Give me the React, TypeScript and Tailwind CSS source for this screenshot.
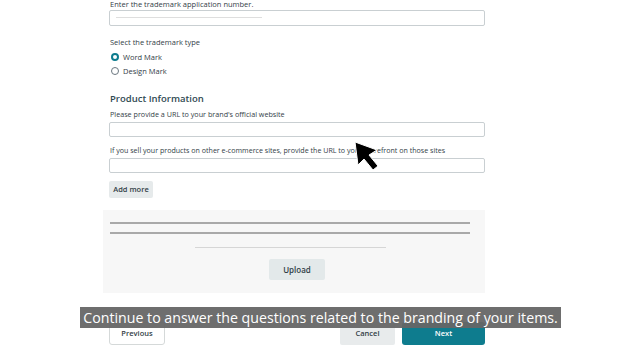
import React from "react";

function Radio({ checked, label }: { checked?: boolean; label: string }) {
  return (
    <div className="flex h-[10px] items-center gap-[4px]">
      {checked ? (
        <span className="box-border h-[8px] w-[8px] rounded-full border-[2.5px] border-[#0e7c8e] bg-white" />
      ) : (
        <span className="box-border h-[8px] w-[8px] rounded-full border border-[#6b7780] bg-white" />
      )}
      <span className="text-[7.5px] leading-[10px] text-[#333e47]">{label}</span>
    </div>
  );
}

function Field({ children }: { children?: React.ReactNode }) {
  return (
    <div className="mt-[3px] h-[15px] rounded-[2px] border border-[#c9cfd2] bg-white">{children}</div>
  );
}

export default function App() {
  return (
    <div className="relative h-[360px] w-[640px] overflow-hidden bg-white font-['Open_Sans',sans-serif]">
      <div className="ml-[109px] flex w-[376px] flex-col text-[#333e47]">
        <p className="pl-px text-[7.5px] leading-[9px]">Enter the trademark application number.</p>
        <div className="mt-px h-[16px] rounded-[2px] border border-[#c9cfd2] bg-white">
          <div className="ml-[6px] mt-[6px] h-px w-[146px] bg-[#dedede]" />
        </div>

        <p className="mt-[11px] pl-px text-[7.5px] leading-[10px]">Select the trademark type</p>
        <div className="mt-[5px] pl-[2px]">
          <Radio checked label="Word Mark" />
        </div>
        <div className="mt-[4px] pl-[2px]">
          <Radio label="Design Mark" />
        </div>

        <h2 className="mt-[17px] pl-px text-[9.5px] font-semibold leading-[12px] text-[#2f4a52]">
          Product Information
        </h2>
        <p className="mt-[4px] pl-px text-[7.2px] leading-[10px]">Please provide a URL to your brand's official website</p>
        <Field />

        <p className="mt-[8px] pl-px text-[7.1px] leading-[10px]">
          If you sell your products on other e-commerce sites, provide the URL to your storefront on those sites
        </p>
        <Field />

        <button className="mt-[8px] h-[17px] w-[44px] rounded-[2px] bg-[#e6eaeb] text-[7.5px] font-semibold text-[#333e47]">
          Add more
        </button>

        <div className="-ml-[6px] mt-[12px] flex h-[83px] w-[382px] flex-col bg-[#f7f7f7]">
          <div className="ml-[7px] mt-[12px] h-[2px] w-[360px] bg-[#a9a9a9]" />
          <div className="ml-[7px] mt-[8px] h-[2px] w-[360px] bg-[#a9a9a9]" />
          <div className="ml-[92px] mt-[13px] h-px w-[191px] bg-[#d6d6d6]" />
          <button className="ml-[166px] mt-[11px] h-[21px] w-[56px] rounded-[2px] bg-[#e3e9ea] text-[8px] font-semibold text-[#2f3e46]">
            Upload
          </button>
        </div>

        <div className="mt-[29px] flex items-center justify-between">
          <button className="h-[23px] w-[56px] rounded-[3px] border border-[#d5d9d9] bg-white text-[7.5px] font-semibold text-[#333e47]">
            Previous
          </button>
          <div className="flex gap-[7px]">
            <button className="h-[23px] w-[55px] rounded-[2px] bg-[#e8ebec] text-[7.5px] font-semibold text-[#333e47]">
              Cancel
            </button>
            <button className="h-[23px] w-[83px] rounded-[3px] bg-[#0e7c8e] text-[7.5px] font-semibold text-white">
              Next
            </button>
          </div>
        </div>
      </div>

      <div className="absolute left-[80px] top-[307px] flex h-[21px] w-[481px] items-center justify-center bg-[#666666]/95">
        <span className="whitespace-nowrap text-[14.2px] leading-[20px] text-white">
          Continue to answer the questions related to the branding of your items.
        </span>
      </div>

      <svg className="absolute left-[350px] top-[138px]" width="34" height="36" viewBox="0 0 34 36">
        <path
          d="M5 4 L8 27 L14 21 L23 32 L28 28 L19 17 L27 12 Z"
          fill="#000"
          stroke="#fff"
          strokeWidth="1"
          strokeLinejoin="round"
        />
      </svg>
    </div>
  );
}
